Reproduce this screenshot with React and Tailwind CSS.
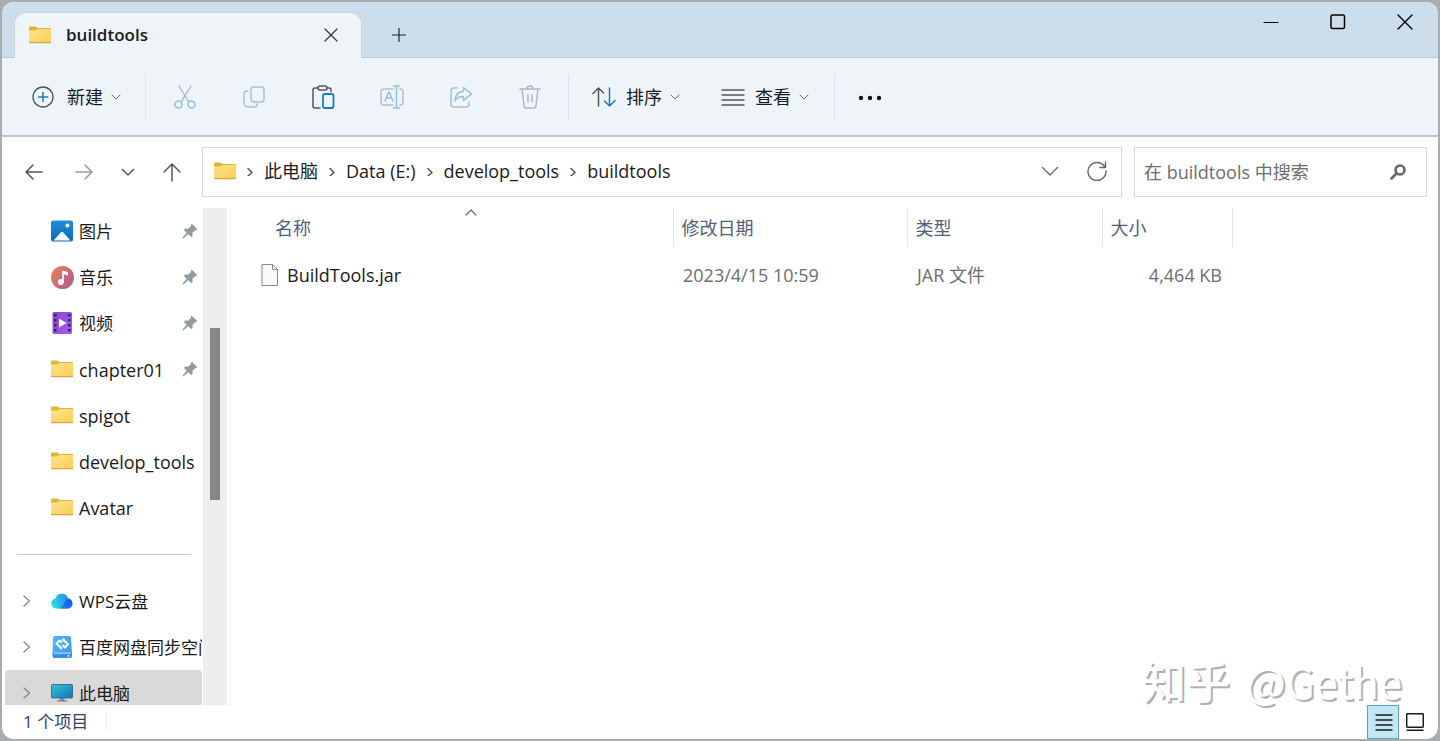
import { useState } from 'react';

const Icon = ({ size = 24, box = 24, className = '', children }) => (
  <svg
    width={size}
    height={size}
    viewBox={`0 0 ${box} ${box}`}
    fill="none"
    stroke="currentColor"
    strokeWidth="1.5"
    strokeLinecap="round"
    strokeLinejoin="round"
    className={`shrink-0 ${className}`}
    aria-hidden="true"
  >
    {children}
  </svg>
);

const FolderIcon = () => (
  <svg width="22" height="22" viewBox="0 0 22 22" className="shrink-0" aria-hidden="true">
    <defs>
      <linearGradient id="folder" x1="0" y1="0" x2="1" y2="1">
        <stop offset="0" stopColor="#ffe392" />
        <stop offset="1" stopColor="#fbcd50" />
      </linearGradient>
    </defs>
    <path d="M0 3.500a1 1 0 0 1 1-1h5.500L8.500 4H21a1 1 0 0 1 1 1v3H0z" fill="#e2b534" />
    <path d="M0 6.500h6.500L8.500 5H21a1 1 0 0 1 1 1v12.500H0z" fill="url(#folder)" />
    <path d="M0 18h22v.4a.8.8 0 0 1-.8.8H.8a.8.8 0 0 1-.8-.8z" fill="#d3a650" />
  </svg>
);

const PictureIcon = () => (
  <svg width="22" height="22" viewBox="0 0 22 22" className="shrink-0" aria-hidden="true">
    <defs>
      <linearGradient id="picture" x1="0" y1="0" x2="0" y2="1">
        <stop offset="0" stopColor="#1f8fdc" />
        <stop offset="1" stopColor="#0a67b8" />
      </linearGradient>
    </defs>
    <rect y="0.500" width="22" height="21" rx="2" fill="url(#picture)" />
    <path d="M2.500 20.500 9.700 12.600a1.700 1.700 0 0 1 2.600 0l7.200 7.900z" fill="#f4faff" />
    <circle cx="16.500" cy="5.500" r="2" fill="#fff" />
  </svg>
);

const MusicIcon = () => (
  <svg width="23" height="23" viewBox="0 0 23 23" className="shrink-0" aria-hidden="true">
    <defs>
      <linearGradient id="music" x1="0" y1="0.200" x2="1" y2="0.800">
        <stop offset="0" stopColor="#e9805a" />
        <stop offset="1" stopColor="#b05a92" />
      </linearGradient>
    </defs>
    <circle cx="11.500" cy="11.500" r="11.500" fill="url(#music)" />
    <circle cx="9.800" cy="16" r="2.900" fill="#fff" />
    <path d="M11.200 16V4.500l5.800 1.500v3.500l-4.200-1.200V16z" fill="#fff" />
  </svg>
);

const VideoIcon = () => (
  <svg width="22" height="24" viewBox="0 0 22 24" className="shrink-0" aria-hidden="true">
    <defs>
      <linearGradient id="video" x1="0" y1="0" x2="1" y2="1">
        <stop offset="0" stopColor="#8a45cc" />
        <stop offset="1" stopColor="#a45cf0" />
      </linearGradient>
    </defs>
    <rect x="1.500" y="1" width="19.500" height="22" rx="1.500" fill="url(#video)" />
    {[3, 8, 13, 18].map((y) => (
      <g key={y} fill="#3c1a78">
        <rect x="3" y={y} width="2.600" height="2.600" rx="0.500" />
        <rect x="17" y={y} width="2.600" height="2.600" rx="0.500" />
      </g>
    ))}
    <path d="M8 7.500v9l7.500-4.500z" fill="#fff" />
  </svg>
);

const CloudIcon = () => (
  <svg width="22" height="22" viewBox="0 0 22 22" className="shrink-0" aria-hidden="true">
    <defs>
      <linearGradient id="cloud" x1="0" y1="0.500" x2="1" y2="0.300">
        <stop offset="0" stopColor="#2ce0e6" />
        <stop offset="1" stopColor="#1e6ff2" />
      </linearGradient>
      <linearGradient id="cloudFront" x1="0" y1="1" x2="1" y2="0">
        <stop offset="0" stopColor="#1e8cf0" />
        <stop offset="1" stopColor="#144cf0" />
      </linearGradient>
    </defs>
    <path d="M5 18.500a5 5 0 0 1-.6-9.900A6.600 6.600 0 0 1 17 8.200 5.200 5.200 0 0 1 16.800 18.500z" fill="url(#cloud)" />
    <path d="M7 18.500c5-.6 5.500-5 7.500-7.400 1.500-1.900 3.800-2 5.300-.8A4.700 4.700 0 0 1 17 18.500z" fill="url(#cloudFront)" />
  </svg>
);

const NetdiskIcon = () => (
  <svg width="22" height="24" viewBox="0 0 22 24" className="shrink-0" aria-hidden="true">
    <defs>
      <linearGradient id="netdisk" x1="0" y1="0" x2="1" y2="1">
        <stop offset="0" stopColor="#4fb8f8" />
        <stop offset="1" stopColor="#3d98ee" />
      </linearGradient>
    </defs>
    <path d="M4 1h14a2 2 0 0 1 2 1.800L21 19H1.500L2 2.800A2 2 0 0 1 4 1z" fill="url(#netdisk)" />
    <path d="M1.500 17.500H21V21a2 2 0 0 1-2 2H3.500a2 2 0 0 1-2-2z" fill="#2f92e8" />
    <path d="M2.500 17.500H20v1.300H2.500z" fill="#a9d8fb" />
    <path d="M9.500 12.500 5.500 8.500 8.500 5.500l2.500 2.300M13 5.500l4 3.700-3 3.300-2.500-2.500" fill="none" stroke="#fff" strokeWidth="2" strokeLinejoin="round" />
    <circle cx="12.500" cy="5" r="1.400" fill="#fff" />
    <circle cx="10" cy="13" r="1.400" fill="#fff" />
    <circle cx="17.500" cy="20.900" r="0.900" fill="#fff" />
  </svg>
);

const ComputerIcon = () => (
  <svg width="22" height="22" viewBox="0 0 22 22" className="shrink-0" aria-hidden="true">
    <defs>
      <linearGradient id="screen" x1="0" y1="0" x2="1" y2="1">
        <stop offset="0" stopColor="#35c3d6" />
        <stop offset="1" stopColor="#1172b5" />
      </linearGradient>
    </defs>
    <path d="M8.500 16h5v3h-5z" fill="#7d93a0" />
    <path d="M6 18.500h10v1H6z" fill="#5c7280" />
    <rect x="0.500" y="2.500" width="21" height="13.500" rx="0.800" fill="url(#screen)" stroke="#3a6f88" />
  </svg>
);

const PinIcon = () => (
  <svg width="16" height="16" viewBox="0 0 16 16" className="shrink-0" aria-hidden="true">
    <path d="M9.800.8 15.200 6l-.8 1-1.400.2-2.600 2.900.2 2.800-1.400 1.200-3-2.800L1.600 15.200.6 15.400l.2-1.200 3.900-4.500-2.800-2.800L3 5.600l3 .2 3-2.700-.1-1.300z" fill="#8f9aa3" />
  </svg>
);

const ChevronDown = () => (
  <Icon size={10} box={10} className="text-[#6b6f74]"><path d="M1 3l4 4 4-4" strokeWidth="1" /></Icon>
);

const EDIT_ACTIONS = [
  {
    name: '剪切',
    icon: (
      <>
        <path d="M6 1l9.500 15.500M18 1 8.500 16.500" stroke="#a9b2ba" strokeWidth="1.200" />
        <circle cx="5.500" cy="19.500" r="3.500" stroke="#8fbfe3" />
        <circle cx="18.500" cy="19.500" r="3.500" stroke="#8fbfe3" />
      </>
    ),
  },
  {
    name: '复制',
    icon: (
      <>
        <path d="M6 6H5a3 3 0 0 0-3 3v9a4 4 0 0 0 4 4h6a3 3 0 0 0 3-3" stroke="#b4bec8" />
        <rect x="9" y="2" width="13" height="15" rx="3" stroke="#9cc6e6" />
      </>
    ),
  },
  {
    name: '粘贴',
    icon: (
      <>
        <path d="M7 3H4a2 2 0 0 0-2 2v16a2 2 0 0 0 2 2h5M16 3h2a2 2 0 0 1 2 2v1.500" stroke="#555" />
        <rect x="7" y="1" width="9" height="4" rx="2" stroke="#555" />
        <rect x="12" y="9" width="10.500" height="14" rx="2" stroke="#1a7bcb" strokeWidth="1.800" />
      </>
    ),
  },
  {
    name: '重命名',
    icon: (
      <>
        <path d="M13 4H4a3 3 0 0 0-3 3v10a3 3 0 0 0 3 3h9M20 4a3 3 0 0 1 3 3v10a3 3 0 0 1-3 3" stroke="#b4bec8" />
        <path d="M5 16l3.700-9h.6L13 16M6.200 13h5.600M13.500 1h6M16.500 1v22M13.500 23h6" stroke="#8fbfe3" />
      </>
    ),
  },
  {
    name: '共享',
    icon: (
      <>
        <path d="M8 3H5a3 3 0 0 0-3 3v13a3 3 0 0 0 3 3h12a3 3 0 0 0 3-3v-2" stroke="#b4bec8" />
        <path d="M14.500 2.500 22.500 9l-8 6.500v-4c-4 0-6.500 1.200-8.500 4 .5-5.500 3-9 8.500-9.200z" stroke="#8fbfe3" />
      </>
    ),
  },
  {
    name: '删除',
    icon: (
      <g stroke="#b0b7be">
        <path d="M2 4h20M4 4l2 16.500A2.500 2.500 0 0 0 8.500 23h7a2.500 2.500 0 0 0 2.500-2.500L20 4M9 4a3 3 0 0 1 6 0" />
        <path d="M10 10v7M14 10v7" />
      </g>
    ),
  },
];

const QUICK_ACCESS = [
  { name: '图片', icon: <PictureIcon />, pinned: true },
  { name: '音乐', icon: <MusicIcon />, pinned: true },
  { name: '视频', icon: <VideoIcon />, pinned: true },
  { name: 'chapter01', icon: <FolderIcon />, pinned: true, latin: true },
  { name: 'spigot', icon: <FolderIcon />, latin: true },
  { name: 'develop_tools', icon: <FolderIcon />, latin: true },
  { name: 'Avatar', icon: <FolderIcon />, latin: true },
];

const LOCATIONS = [
  { name: 'WPS云盘', icon: <CloudIcon /> },
  { name: '百度网盘同步空间', icon: <NetdiskIcon /> },
  { name: '此电脑', icon: <ComputerIcon />, selected: true },
];

const PATH = ['此电脑', 'Data (E:)', 'develop_tools', 'buildtools'];

const FILES = [{ name: 'BuildTools.jar', date: '2023/4/15 10:59', type: 'JAR 文件', size: '4,464 KB' }];

function TitleBar() {
  return (
    <header className="flex h-14 shrink-0 border-b border-[#bccbd9] bg-[#ccddeb]">
      <div className="-mb-px ml-3 mt-[10px] flex w-[348px] items-center rounded-t-xl border border-b-0 border-[#c9d7e3] bg-[#eff4f9] pb-[2px] pl-[14px] pr-5">
        <FolderIcon />
        <span className="ml-[15px] flex-1 text-[17px] font-semibold leading-6 text-[#1b1b1b]">buildtools</span>
        <button aria-label="关闭标签页" className="flex size-5 items-center justify-center text-[#333]">
          <Icon size={14} box={14}><path d="M1 1l12 12M13 1 1 13" strokeWidth="1.200" /></Icon>
        </button>
      </div>
      <button aria-label="新建标签页" className="mt-[10px] flex w-[74px] items-center justify-center text-[#222]">
        <Icon size={14} box={14}><path d="M7 0v14M0 7h14" strokeWidth="1.200" /></Icon>
      </button>
      <div className="ml-auto flex h-10 text-black">
        <button aria-label="最小化" className="flex w-[67px] items-center justify-center">
          <Icon size={16} box={16}><path d="M1 8.500h14" strokeWidth="1.200" /></Icon>
        </button>
        <button aria-label="最大化" className="flex w-[67px] items-center justify-center">
          <Icon size={16} box={16}><rect x="1" y="1" width="13.500" height="13.500" rx="1.500" /></Icon>
        </button>
        <button aria-label="关闭" className="flex w-[67px] items-center justify-center">
          <Icon size={16} box={16}><path d="M1 1l14 14M15 1 1 15" strokeWidth="1.400" /></Icon>
        </button>
      </div>
    </header>
  );
}

function Toolbar() {
  return (
    <div className="flex h-[79px] shrink-0 items-center border-b-2 border-[#bac7d3] bg-[#eff4f9] text-lg leading-6 text-[#1a1a1a]">
      <button className="flex items-center pl-[30px] pr-6">
        <Icon size={22} box={22} className="text-[#4f4f4f]">
          <circle cx="11" cy="11" r="10" strokeWidth="1.300" />
          <path d="M11 6.500v9M6.500 11h9" stroke="#1a7bcb" />
        </Icon>
        <span className="ml-[13px] mr-2">新建</span>
        <ChevronDown />
      </button>
      <span className="mr-1 h-[46px] w-px bg-[#dce2e8]" />
      {EDIT_ACTIONS.map((a) => (
        <button key={a.name} aria-label={a.name} className="flex w-[69px] justify-center">
          <Icon>{a.icon}</Icon>
        </button>
      ))}
      <span className="ml-1 h-[46px] w-px bg-[#dce2e8]" />
      <button className="flex items-center pl-[23px]">
        <Icon>
          <path d="M6.500 21V3M1 8.500 6.500 3l5 5" stroke="#555" />
          <path d="M17.500 3v18M12.500 16l5 5 5.500-5.500" stroke="#1a7bcb" />
        </Icon>
        <span className="ml-[10px] mr-2">排序</span>
        <ChevronDown />
      </button>
      <button className="flex items-center pl-[41px] pr-[25px]">
        <Icon className="text-[#555]"><path d="M1 5h22M1 10h22M1 15h22M1 20h22" strokeWidth="1.300" /></Icon>
        <span className="ml-[10px] mr-2">查看</span>
        <ChevronDown />
      </button>
      <span className="h-[46px] w-px bg-[#dce2e8]" />
      <button aria-label="更多" className="flex w-[70px] justify-center">
        <Icon><g fill="#111" stroke="none"><circle cx="3" cy="13" r="2.200" /><circle cx="12" cy="13" r="2.200" /><circle cx="21" cy="13" r="2.200" /></g></Icon>
      </button>
    </div>
  );
}

function AddressRow() {
  const [query, setQuery] = useState('');

  return (
    <div className="flex h-[71px] shrink-0 items-start pr-[11px] pt-[10px]">
      <div className="flex h-[50px] w-[200px] shrink-0 items-center pl-5 text-[#555]">
        <button aria-label="后退" className="flex w-6 justify-center">
          <Icon size={18} box={18}><path d="M17 9H1M8 2 1 9l7 7" /></Icon>
        </button>
        <button aria-label="前进" className="ml-[26px] flex w-6 justify-center text-[#999]">
          <Icon size={18} box={18}><path d="M1 9h16M10 2l7 7-7 7" /></Icon>
        </button>
        <button aria-label="最近位置" className="ml-5 flex w-6 justify-center">
          <Icon size={14} box={14}><path d="M1.500 4.500 7 10l5.500-5.500" /></Icon>
        </button>
        <button aria-label="向上" className="ml-5 flex w-6 justify-center">
          <Icon size={20} box={20}><path d="M10 19V2M2 10l8-8 8 8" /></Icon>
        </button>
      </div>
      <nav aria-label="地址" className="flex h-[50px] min-w-0 flex-1 items-center border border-[#d9d9d9] bg-white pb-[2px] pl-[11px] text-lg leading-6 text-[#1a1a1a]">
        <FolderIcon />
        {PATH.map((p) => (
          <div key={p} className="flex items-center whitespace-nowrap">
            <span className="flex w-[28px] justify-center text-[#555]">
              <Icon size={10} box={10}><path d="M3 2.500 7 6.500l-4 3.500" /></Icon>
            </span>
            <a href="#">{p}</a>
          </div>
        ))}
        <button aria-label="历史记录" className="ml-auto mr-7 text-[#666]">
          <Icon size={18} box={18}><path d="M1.500 5.500 9 13l7.500-7.500" strokeWidth="1.300" /></Icon>
        </button>
        <button aria-label="刷新" className="mr-[14px] text-[#666]">
          <Icon size={20} box={20}><path d="M17.500 5.500A9 9 0 1 0 19 10M18.500 1v5.500H13" strokeWidth="1.400" /></Icon>
        </button>
      </nav>
      <label className="ml-3 flex h-[50px] w-[293px] shrink-0 items-center border border-[#d9d9d9] bg-white pl-[9px] pr-5">
        <input
          type="text"
          value={query}
          onChange={(e) => setQuery(e.target.value)}
          placeholder="在 buildtools 中搜索"
          aria-label="在 buildtools 中搜索"
          className="min-w-0 flex-1 text-lg leading-6 outline-none placeholder:text-[#6d6d6d]"
        />
        <Icon size={16} box={16} className="text-[#666]">
          <circle cx="10" cy="6" r="4.500" strokeWidth="2.600" />
          <path d="M6.500 9.500 1.500 14.500" strokeWidth="2.600" />
        </Icon>
      </label>
    </div>
  );
}

function SideItem({ item, expandable }) {
  return (
    <a
      href="#"
      className={`ml-[3px] mr-px flex h-[46px] items-center overflow-hidden whitespace-nowrap rounded-t-sm leading-6 text-[#1a1a1a] ${item.latin ? 'text-lg' : 'text-[17px]'} ${item.selected ? 'bg-[#d9d9d9]' : ''}`}
    >
      <span className="flex w-[46px] shrink-0 pl-4 text-[#888]">
        {expandable && <Icon size={12} box={12}><path d="M3 1l5.500 5L3 11" strokeWidth="1.400" /></Icon>}
      </span>
      <span className="flex w-[22px] shrink-0 justify-center">{item.icon}</span>
      <span className="ml-[6px] flex-1 pt-[2px]">{item.name}</span>
      {item.pinned && <span className="mr-1"><PinIcon /></span>}
    </a>
  );
}

function Sidebar() {
  return (
    <aside className="flex w-[229px] shrink-0 border-r-2 border-[#f7f7f7]">
      <nav aria-label="导航窗格" className="w-[201px] overflow-hidden">
        {QUICK_ACCESS.map((item) => <SideItem key={item.name} item={item} />)}
        <div className="flex h-12 items-center pl-[15px] pr-3">
          <hr className="flex-1 border-[#c4c4c4]" />
        </div>
        {LOCATIONS.map((item) => <SideItem key={item.name} item={item} expandable />)}
      </nav>
      <div className="w-6 bg-[#eeeeee] pl-[7px] pt-[120px]">
        <div className="h-[172px] w-[10px] bg-[#868686]" />
      </div>
    </aside>
  );
}

function FileTable() {
  return (
    <div className="min-w-0 flex-1 overflow-hidden">
      <table className="w-[1001px] table-fixed text-lg leading-6">
        <colgroup>
          <col className="w-[442px]" />
          <col className="w-[234px]" />
          <col className="w-[195px]" />
          <col className="w-[130px]" />
        </colgroup>
        <thead>
          <tr className="h-[39px] text-left text-[#4c607a]">
            <th className="relative border-r border-[#e5e5e5] pl-11 font-normal">
              名称
              <span className="absolute left-[234px] top-0 text-[#666]">
                <Icon size={12} box={12}><path d="M1 7l5-5 5 5" strokeWidth="1.200" /></Icon>
              </span>
            </th>
            <th className="border-r border-[#e5e5e5] pl-2 font-normal">修改日期</th>
            <th className="border-r border-[#e5e5e5] pl-2 font-normal">类型</th>
            <th className="border-r border-[#e5e5e5] pl-2 font-normal">大小</th>
          </tr>
        </thead>
        <tbody>
          {FILES.map((f) => (
            <tr key={f.name} className="h-14 text-[#6d6d6d]">
              <td className="pl-[30px] text-[#1a1a1a]">
                <div className="flex items-center gap-2">
                  <svg width="18" height="22" viewBox="0 0 18 22" aria-hidden="true">
                    <path d="M1 .5h10.500L16.500 5.500v16H1z" fill="#fafafa" stroke="#888" />
                    <path d="M11.500.5v5h5" fill="none" stroke="#888" />
                  </svg>
                  {f.name}
                </div>
              </td>
              <td className="pl-[10px]">{f.date}</td>
              <td className="pl-[10px]">{f.type}</td>
              <td className="pr-[10px] text-right">{f.size}</td>
            </tr>
          ))}
        </tbody>
      </table>
    </div>
  );
}

function StatusBar() {
  return (
    <footer className="flex h-[34px] shrink-0 items-stretch pl-[21px] pr-[7px] text-[17px] leading-[34px] text-[#2b4263]">
      <span className="pr-[18px]">1 个项目</span>
      <span className="my-2 w-px bg-[#ececec]" />
      <button aria-label="详细信息" className="ml-auto flex w-8 items-center justify-center border border-[#5fa5c2] bg-[#c2e8f8] pl-[2px] text-[#1a1a1a]">
        <Icon size={18} box={18}><path d="M1 2h16M1 7h16M1 12h16M1 17h16" strokeWidth="1.300" /></Icon>
      </button>
      <button aria-label="大图标" className="flex w-8 items-center justify-center text-[#1a1a1a]">
        <Icon size={18} box={18}><rect x="0.700" y="0.700" width="16.600" height="13.600" rx="1" /><path d="M1 17.200h16" /></Icon>
      </button>
    </footer>
  );
}

export default function App() {
  return (
    <div className="h-screen overflow-hidden bg-[#a9adb0] p-[2px] font-['Open_Sans','Noto_Sans_CJK_SC',sans-serif]">
      <div className="relative flex h-full flex-col overflow-hidden rounded-xl bg-white">
        <TitleBar />
        <Toolbar />
        <AddressRow />
        <main className="flex min-h-0 flex-1">
          <Sidebar />
          <FileTable />
        </main>
        <StatusBar />
        <div className="pointer-events-none absolute bottom-7 right-9 flex items-baseline gap-4 whitespace-nowrap font-['Noto_Sans_CJK_SC',sans-serif] text-[44px] font-medium leading-[60px] text-white [text-shadow:2px_2px_0_#b0b0b0]">
          <span>知乎</span>
          <span className="text-[42px] font-normal">@Gethe</span>
        </div>
      </div>
    </div>
  );
}
